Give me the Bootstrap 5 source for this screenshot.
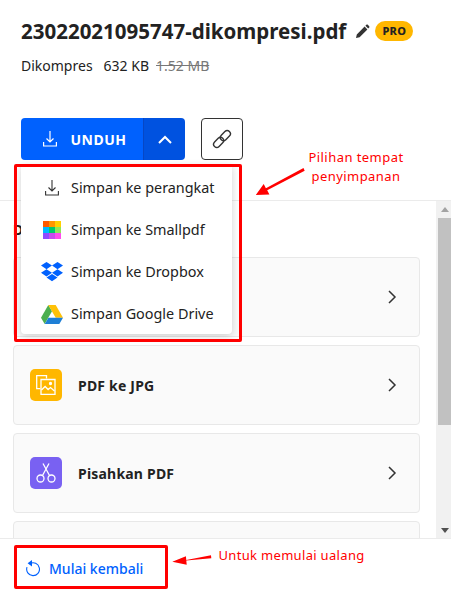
<!DOCTYPE html>
<html lang="id">
<head>
<meta charset="utf-8">
<title>Unduh</title>
<link href="https://cdn.jsdelivr.net/npm/bootstrap@5.3.0/dist/css/bootstrap.min.css" rel="stylesheet">
<style>
html,body{height:595px;overflow:hidden;background:#fff}
body{font-family:"Noto Sans","Liberation Sans",sans-serif;color:#222;position:relative;width:451px}
.app-shell{height:595px}
.top-area{height:201px;padding:19px 0 0 21px;border-bottom:1px solid #ebebeb;flex:none}
.file-title{font-size:20.5px;font-weight:700;line-height:24px;margin:0;color:#222}
.pencil{margin-left:9px}
.pro-tag{background:#ffb700;color:#222;font-size:11px;font-weight:800;width:38px;height:20px;border-radius:10px;line-height:20px;text-align:center;letter-spacing:.3px;margin-left:5px}
.stats-row{font-size:14px;line-height:18px;margin-top:14px;height:18px}
.new-size{margin-left:11px}
.old-size{color:#777;text-decoration:line-through;margin-left:7px}
.actions{margin-top:43px;position:relative}
.btn-unduh,.btn-unduh:hover{background:#0061fe;color:#fff;border:0;width:123px;height:42px;font-weight:700;font-size:14px;letter-spacing:.5px;border-radius:4px 0 0 4px;padding:0 0 0 5px}
.btn-arrow,.btn-arrow:hover{background:#0052e0;border:0;border-left:1px solid #0747c4;width:42px;height:42px;border-radius:0 4px 4px 0;padding:0}
.btn-linkout{width:42px;height:42px;border:1px solid #333;border-radius:4px;padding:0;margin-left:16px;background:#fff}
.gap-unduh{margin-right:13px}
.save-menu{display:block;left:0;top:47px;width:211px;height:169px;padding:0;border:0;border-radius:0 0 4px 4px;box-shadow:0 2px 8px rgba(0,0,0,.18);z-index:5}
.save-item{height:42px;font-size:14.4px;padding:0;color:#222;gap:9px}
.save-item:first-child{margin-top:2px}
.save-ico{width:41px;flex:none;margin-left:10px;margin-right:-10px}
.mid-area{flex:1 1 auto;min-height:0;overflow:hidden}
.tool-list{flex:1 1 auto;padding:0 16px 0 13px;overflow:hidden}
.hidden-head{font-size:14px;height:56px;line-height:58px;font-weight:700;flex:none}
.tool-card{height:80px;flex:none;background:#fafafa;border:1px solid #e8e8e8;border-radius:4px;margin-bottom:8px;padding:0 22px 0 16px}
.tool-name{font-size:14px;font-weight:700;margin-left:16px;letter-spacing:.2px}
.tool-ico{width:32px;height:32px;border-radius:5px;flex:none}
.ico-yellow{background:#ffb700}
.ico-purple{background:#7961f2}
.scroll-rail{width:15px;flex:none;background:#f1f1f1;padding-left:2px}
.rail-up{height:17px}
.scroll-thumb{height:207px;background:#c1c1c1}
.rail-down{margin-top:auto;height:16px}
.bottom-area{height:57px;flex:none;border-top:1px solid #ebebeb;background:#fff;padding-left:26px}
.restart{color:#0061fe;font-size:14px;font-weight:500;text-decoration:none;gap:9px;margin-top:2px}
.mark-box{position:absolute;border:3px solid #f00;border-radius:2px;z-index:8;pointer-events:none}
.mark-one{left:14px;top:164px;width:228px;height:178px}
.mark-two{left:14px;top:545px;width:154px;height:44px}
.note{position:absolute;color:#f00;font-size:13px;line-height:19px;letter-spacing:.45px;text-align:center;z-index:9}
.note-one{left:300px;top:148px;width:112px}
.note-two{left:218.5px;top:546px;white-space:nowrap;letter-spacing:.32px}
.arrows{position:absolute;left:0;top:0;z-index:9;pointer-events:none}
</style>
</head>
<body>
<div class="app-shell d-flex flex-column">
  <header class="top-area">
    <div class="d-flex align-items-center">
      <h1 class="file-title">23022021095747-dikompresi.pdf</h1>
      <svg class="pencil" width="15" height="15" viewBox="0 0 15 15" aria-hidden="true"><path fill="#333" d="M1 14l.8-3.6L9.6 2.6l2.8 2.8-7.8 7.8zM10.4 1.8l1-1c.4-.4 1-.4 1.4 0l1.4 1.4c.4.4.4 1 0 1.4l-1 1z"/></svg>
      <span class="pro-tag">PRO</span>
    </div>
    <div class="stats-row d-flex">
      <span>Dikompres</span><span class="new-size">632 KB</span><span class="old-size">1.52 MB</span>
    </div>
    <div class="actions d-flex align-items-start">
      <div class="btn-group">
        <button type="button" class="btn btn-unduh d-flex align-items-center justify-content-center">
          <svg class="gap-unduh" width="14" height="16" viewBox="0 0 14 16" fill="none" stroke="#fff" stroke-width="1.2" aria-hidden="true"><path d="M7 0v11M3.5 7.5L7 11l3.5-3.5M.6 11v4h12.8v-4"/></svg>UNDUH
        </button>
        <button type="button" class="btn btn-arrow d-flex align-items-center justify-content-center" aria-label="Pilihan">
          <svg width="14" height="9" viewBox="0 0 14 9" fill="none" stroke="#fff" stroke-width="2" aria-hidden="true"><path d="M1 8l6-6 6 6"/></svg>
        </button>
      </div>
      <button type="button" class="btn btn-linkout d-flex align-items-center justify-content-center" aria-label="Tautan">
        <svg width="20" height="20" viewBox="0 0 20 20" fill="none" stroke="#333" stroke-width="1.4" aria-hidden="true"><g transform="rotate(-45 10 10)"><rect x="-.5" y="6.8" width="11.5" height="6.4" rx="3.2"/><rect x="9" y="6.8" width="11.5" height="6.4" rx="3.2"/></g></svg>
      </button>
      <div class="dropdown-menu save-menu">
        <div class="save-item d-flex align-items-center">
          <span class="save-ico d-flex justify-content-center"><svg width="14" height="16" viewBox="0 0 14 16" fill="none" stroke="#333" stroke-width="1.1" aria-hidden="true"><path d="M7 0v11M3.5 7.5L7 11l3.5-3.5M.6 11v4h12.8v-4"/></svg></span>
          <span>Simpan ke perangkat</span>
        </div>
        <div class="save-item d-flex align-items-center">
          <span class="save-ico d-flex justify-content-center"><svg width="18" height="18" viewBox="0 0 18 18" aria-hidden="true"><path fill="#ff5a00" d="M0 0h6v6H0z"/><path fill="#ff9500" d="M6 0h6v6H6z"/><path fill="#ffd000" d="M12 0h6v6h-6z"/><path fill="#00b8ff" d="M0 6h6v6H0z"/><path fill="#00c96b" d="M6 6h6v6H6z"/><path fill="#8ce65a" d="M12 6h6v6h-6z"/><path fill="#8f4bff" d="M0 12h6v6H0z"/><path fill="#c84bef" d="M6 12h6v6H6z"/><path fill="#ff4bee" d="M12 12h6v6h-6z"/></svg></span>
          <span>Simpan ke Smallpdf</span>
        </div>
        <div class="save-item d-flex align-items-center">
          <span class="save-ico d-flex justify-content-center"><svg width="22" height="20" viewBox="0 0 22 20" aria-hidden="true"><path fill="#0061fe" d="M5.5 0L0 3.6l5.5 3.6L11 3.6zM16.5 0L11 3.6l5.5 3.6L22 3.6zM0 10.8l5.5 3.6 5.5-3.6-5.5-3.6zM16.5 7.2L11 10.8l5.5 3.6 5.5-3.6zM5.5 15.6L11 19.2l5.5-3.6L11 12z"/></svg></span>
          <span>Simpan ke Dropbox</span>
        </div>
        <div class="save-item d-flex align-items-center">
          <span class="save-ico d-flex justify-content-center"><svg width="22" height="19" viewBox="0 0 22 19" aria-hidden="true"><path fill="#4caf50" d="M7.3 0L0 12.7 3.7 19l7.3-12.7z"/><path fill="#ffc107" d="M7.3 0h7.4L22 12.7h-7.3z"/><path fill="#1e7fd6" d="M7.4 12.7H22L18.3 19H3.7z"/></svg></span>
          <span>Simpan Google Drive</span>
        </div>
      </div>
    </div>
  </header>

  <main class="mid-area d-flex">
    <div class="tool-list d-flex flex-column">
      <div class="hidden-head">D</div>
      <div class="tool-card d-flex align-items-center justify-content-end">
        <svg width="10" height="14" viewBox="0 0 10 14" fill="none" stroke="#333" stroke-width="1.5" aria-hidden="true"><path d="M2 1l6 6-6 6"/></svg>
      </div>
      <div class="tool-card d-flex align-items-center">
        <span class="tool-ico ico-yellow d-flex align-items-center justify-content-center">
          <svg width="20" height="20" viewBox="0 0 20 20" fill="none" stroke="#fff" stroke-width="1.3" aria-hidden="true"><path d="M10.5 3.5V.7H.7v13h3.6"/><path d="M5 4.5h14v15H5z"/><path d="M5.5 15l3.6-3.5 3 3 2.4-2 4 3.5"/><circle cx="14.5" cy="8.5" r="1" fill="#fff"/></svg>
        </span>
        <span class="tool-name">PDF ke JPG</span>
        <svg class="ms-auto" width="10" height="14" viewBox="0 0 10 14" fill="none" stroke="#333" stroke-width="1.5" aria-hidden="true"><path d="M2 1l6 6-6 6"/></svg>
      </div>
      <div class="tool-card d-flex align-items-center">
        <span class="tool-ico ico-purple d-flex align-items-center justify-content-center">
          <svg width="20" height="20" viewBox="0 0 20 20" fill="none" stroke="#fff" stroke-width="1.3" aria-hidden="true"><circle cx="4.5" cy="15.5" r="3.5"/><circle cx="15.5" cy="15.5" r="3.5"/><path d="M6.5 12.5L13 .5M13.5 12.5L7 .5"/></svg>
        </span>
        <span class="tool-name">Pisahkan PDF</span>
        <svg class="ms-auto" width="10" height="14" viewBox="0 0 10 14" fill="none" stroke="#333" stroke-width="1.5" aria-hidden="true"><path d="M2 1l6 6-6 6"/></svg>
      </div>
      <div class="tool-card"></div>
    </div>
    <div class="scroll-rail d-flex flex-column">
      <div class="rail-up d-flex align-items-center justify-content-center">
        <svg width="8" height="5" viewBox="0 0 8 5" aria-hidden="true"><path fill="#a3a3a3" d="M4 0l4 5H0z"/></svg>
      </div>
      <div class="scroll-thumb"></div>
      <div class="rail-down d-flex align-items-center justify-content-center">
        <svg width="8" height="5" viewBox="0 0 8 5" aria-hidden="true"><path fill="#505050" d="M0 0h8L4 5z"/></svg>
      </div>
    </div>
  </main>

  <footer class="bottom-area d-flex align-items-center">
    <a href="#" class="restart d-flex align-items-center">
      <svg width="14" height="17" viewBox="0 0 14 17" fill="none" stroke="#0061fe" stroke-width="1.1" aria-hidden="true"><path d="M4 3.6a6.4 6.4 0 1 1-3 3.6"/><path fill="#0061fe" stroke="none" d="M6 0v6.4L1.6 3.2z"/></svg>
      <span>Mulai kembali</span>
    </a>
  </footer>
</div>

<div class="mark-box mark-one"></div>
<div class="mark-box mark-two"></div>
<div class="note note-one">Pilihan tempat<br>penyimpanan</div>
<div class="note note-two">Untuk memulai ualang</div>
<svg class="arrows" width="451" height="595" viewBox="0 0 451 595" aria-hidden="true">
  <path fill="#f00" d="M303.5 168l1.2 2.8-37.5 19.4 2.2 4.4-13.6.5 7.9-11 2.2 4.1z"/>
  <path fill="#f00" d="M211 555.2l.3 3-25 2.3.4 4.2-14.4-2.9 13.6-5.6.4 3.8z"/>
</svg>
<script src="https://cdn.jsdelivr.net/npm/bootstrap@5.3.0/dist/js/bootstrap.bundle.min.js"></script>
</body>
</html>
